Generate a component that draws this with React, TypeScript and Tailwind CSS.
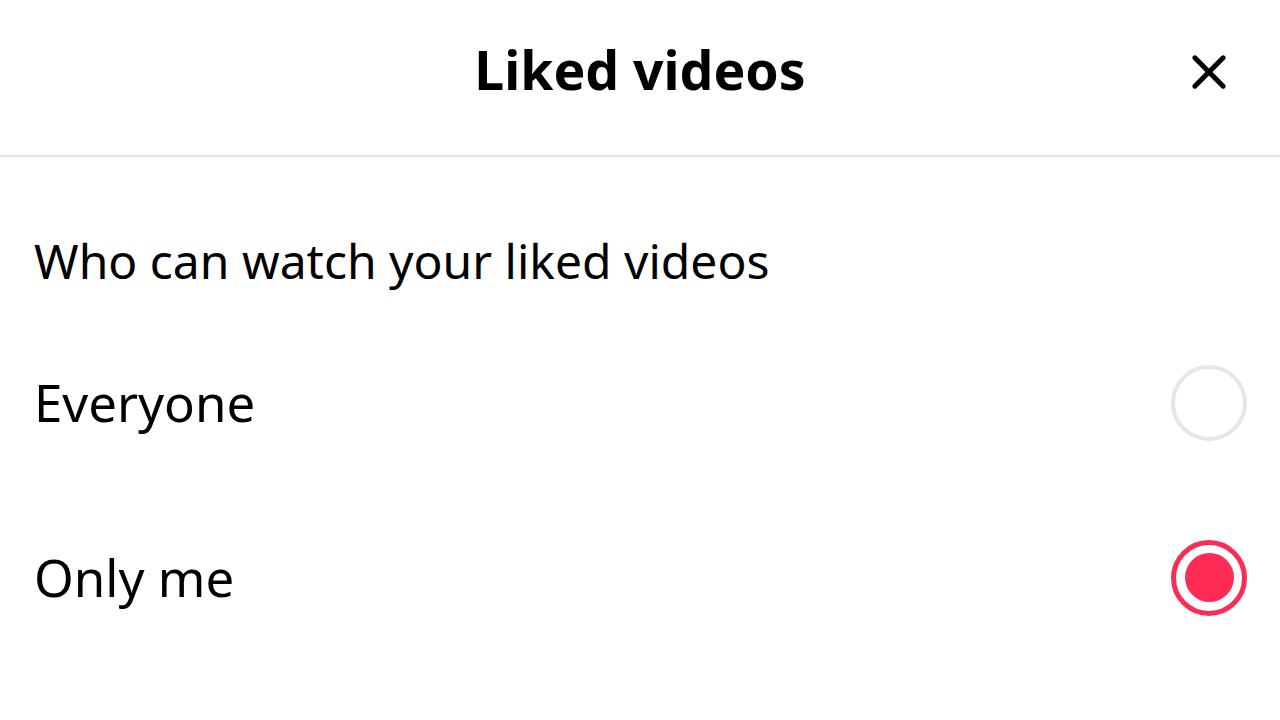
import React, { useState } from "react";

type Option = { id: string; label: string };

const options: Option[] = [
  { id: "everyone", label: "Everyone" },
  { id: "me", label: "Only me" },
];

function Radio({ checked }: { checked: boolean }) {
  if (checked) {
    return (
      <span className="grid h-[76px] w-[76px] place-items-center rounded-full border-[5px] border-[#fe2c55]">
        <span className="block h-[49px] w-[49px] rounded-full bg-[#fe2c55]" />
      </span>
    );
  }
  return <span className="block h-[76px] w-[76px] rounded-full border-[4px] border-[#e6e6e6]" />;
}

export default function App() {
  const [value, setValue] = useState("me");

  return (
    <main className="min-h-screen w-full bg-white text-black" style={{ fontFamily: "'Noto Sans', 'Open Sans', sans-serif" }}>
      <header className="relative flex h-[157px] justify-center border-b-2 border-[#e2e2e2] pt-[43px]">
        <h1 className="text-[53.5px] font-bold leading-none">Liked videos</h1>
        <button className="absolute right-[48px] top-[49px] grid h-[46px] w-[46px] place-items-center">
          <svg viewBox="0 0 24 24" className="h-[46px] w-[46px]" fill="none" stroke="currentColor" strokeWidth={2.6} strokeLinecap="round">
            <path d="M4.6 4.6l14.8 14.8M19.4 4.6L4.6 19.4" />
          </svg>
        </button>
      </header>

      <section className="pl-[34px] pr-[33px]">
        <p className="mt-[80px] text-[48px] leading-none">Who can watch your liked videos</p>
        <div className="mt-[30px] flex flex-col">
          {options.map((o) => (
            <button
              key={o.id}
              onClick={() => setValue(o.id)}
              className="flex h-[175px] items-center justify-between text-left"
            >
              <span className="text-[51px] leading-none">{o.label}</span>
              <Radio checked={value === o.id} />
            </button>
          ))}
        </div>
      </section>
    </main>
  );
}
